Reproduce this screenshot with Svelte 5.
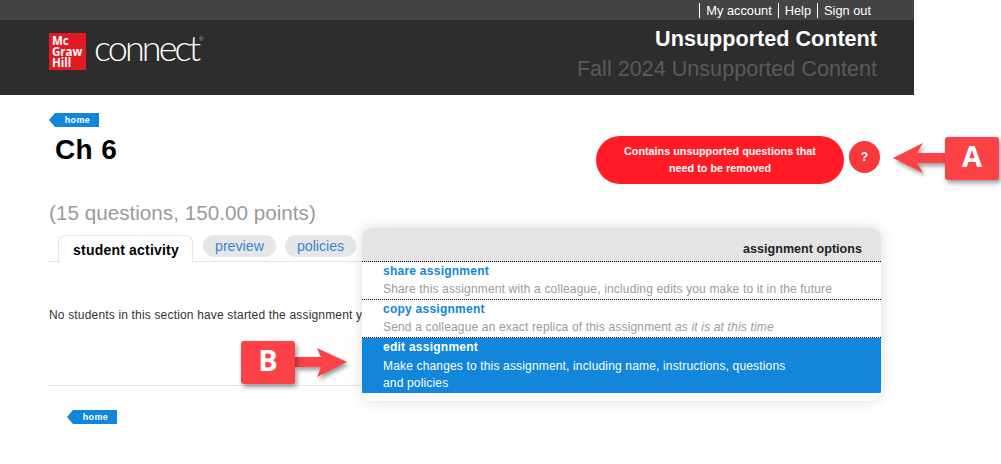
<script>
  const links = ['My account', 'Help', 'Sign out'];
  const tabs = ['preview', 'policies'];
</script>

<div class="page">
  <header class="header">
    <nav class="topbar">
      {#each links as link}
        <span class="toplink">{link}</span>
      {/each}
    </nav>
    <div class="brand">
      <div class="logo">
        <div class="mh"><span>Mc</span><span>Graw</span><span>Hill</span></div>
        <span class="connect">connect</span><span class="reg">®</span>
      </div>
      <div class="course">
        <div class="course-title">Unsupported Content</div>
        <div class="course-sub">Fall 2024 Unsupported Content</div>
      </div>
    </div>
  </header>

  <main class="main">
    <div class="home"><span>home</span></div>
    <h1 class="title">Ch 6</h1>
    <p class="count">(15 questions, 150.00 points)</p>
    <div class="tabs">
      <div class="tab active">student activity</div>
      {#each tabs as t}
        <div class="tab pill">{t}</div>
      {/each}
    </div>
    <p class="empty">No students in this section have started the assignment yet.</p>
    <hr class="rule" />
    <div class="home second"><span>home</span></div>
  </main>

  <div class="warning">Contains unsupported questions that<br />need to be removed</div>
  <div class="help">?</div>

  <section class="popup">
    <div class="popup-head">assignment options</div>
    <div class="option">
      <div class="opt-title">share assignment</div>
      <div class="opt-desc">Share this assignment with a colleague, including edits you make to it in the future</div>
    </div>
    <div class="option">
      <div class="opt-title">copy assignment</div>
      <div class="opt-desc">Send a colleague an exact replica of this assignment <em>as it is at this time</em></div>
    </div>
    <div class="option selected">
      <div class="opt-title">edit assignment</div>
      <div class="opt-desc">Make changes to this assignment, including name, instructions, questions<br />and policies</div>
    </div>
  </section>

  <svg class="arrow arrow-a" width="60" height="40" viewBox="0 0 60 40">
    <path d="M2 20 L32 5 L26 15 L56 15 L56 25 L26 25 L32 35 Z" />
  </svg>
  <div class="callout callout-a">A</div>
  <svg class="arrow arrow-b" width="60" height="40" viewBox="0 0 60 40">
    <path d="M4 15 L30 15 L26 6 L56 20 L26 35 L30 25 L4 25 Z" />
  </svg>
  <div class="callout callout-b">B</div>
</div>

<style>
  :global(body) {
    margin: 0;
    background: #fff;
  }
  .page {
    position: relative;
    width: 1001px;
    height: 464px;
    overflow: hidden;
    font-family: "Liberation Sans", Arial, sans-serif;
    color: #222;
  }
  .header {
    width: 914px;
    height: 95px;
    background: #2d2d2d;
  }
  .topbar {
    display: flex;
    justify-content: flex-end;
    align-items: center;
    height: 20px;
    padding-right: 43px;
    box-sizing: border-box;
    background: #444;
    color: #fff;
    font-size: 12.8px;
    line-height: 15px;
  }
  .toplink {
    border-left: 1px solid #fff;
    padding-left: 6px;
    margin-left: 6px;
  }
  .brand {
    display: flex;
    justify-content: space-between;
    padding: 0 37px 0 49px;
  }
  .logo {
    display: flex;
    align-items: flex-start;
    padding-top: 13px;
  }
  .mh {
    display: flex;
    flex-direction: column;
    justify-content: center;
    box-sizing: border-box;
    width: 37px;
    height: 37px;
    padding-left: 3px;
    background: #e21a23;
    color: #fff;
    font-family: "Open Sans", sans-serif;
    font-size: 11.5px;
    font-weight: 700;
    line-height: 11px;
  }
  .connect {
    margin: 1px 0 0 8px;
    color: #fff;
    font-family: "Lato", sans-serif;
    font-size: 36px;
    font-weight: 300;
    line-height: 26px;
    letter-spacing: -2.9px;
  }
  .reg {
    margin: 3px 0 0 1px;
    color: #aaa;
    font-size: 6px;
    line-height: 7px;
  }
  .course {
    text-align: right;
    padding-top: 4px;
    font-size: 21.6px;
    line-height: 30px;
  }
  .course-title {
    color: #fff;
    font-weight: 700;
  }
  .course-sub {
    color: #5a5a5a;
  }
  .main {
    padding: 18px 0 0 49px;
    width: 832px;
  }
  .home {
    display: flex;
    justify-content: flex-end;
    width: 50px;
    height: 14px;
    background: #1186da;
    clip-path: polygon(6px 0, 100% 0, 100% 100%, 6px 100%, 0 50%);
    color: #fff;
    font-size: 9px;
    font-weight: 700;
    line-height: 14px;
    letter-spacing: 0.3px;
  }
  .home span {
    padding-right: 9px;
  }
  .title {
    margin: 7px 0 0 6px;
    color: #000;
    font-size: 28px;
    font-weight: 700;
    line-height: 32px;
    letter-spacing: 0.4px;
  }
  .count {
    margin: 35px 0 0;
    color: #9b9b9b;
    font-size: 20.7px;
    line-height: 24px;
  }
  .tabs {
    display: flex;
    align-items: flex-start;
    gap: 9px;
    height: 27px;
    margin-top: 10px;
    padding-left: 9px;
    box-sizing: border-box;
    border-bottom: 1px solid #e4e4e4;
  }
  .tab {
    box-sizing: border-box;
    text-align: center;
  }
  .active {
    width: 135px;
    height: 28px;
    margin-right: 1px;
    border: 1px solid #e4e4e4;
    border-bottom: 0;
    border-radius: 8px 8px 0 0;
    background: #fff;
    color: #000;
    font-size: 14px;
    font-weight: 700;
    line-height: 29px;
    letter-spacing: 0.2px;
    padding-left: 1px;
  }
  .pill {
    height: 22px;
    padding: 0 12px;
    border-radius: 11px;
    background: #e6e6e6;
    color: #3b82d6;
    font-size: 14.2px;
    line-height: 22px;
  }
  .empty {
    margin: 46px 0 0;
    color: #333;
    font-size: 12px;
    line-height: 14px;
    white-space: nowrap;
    letter-spacing: 0.17px;
  }
  .rule {
    height: 1px;
    margin: 63px 0 0;
    border: 0;
    background: #e4e4e4;
  }
  .second {
    margin: 24px 0 0 18px;
  }
  .warning {
    position: absolute;
    left: 596px;
    top: 136px;
    box-sizing: border-box;
    width: 248px;
    height: 48px;
    padding-top: 7px;
    border-radius: 24px;
    background: #ff1c24;
    color: #fff;
    font-size: 10.8px;
    font-weight: 700;
    line-height: 17px;
    text-align: center;
  }
  .help {
    position: absolute;
    left: 849px;
    top: 141px;
    width: 31px;
    height: 32px;
    border-radius: 50%;
    background: #f8383d;
    color: #fff;
    font-size: 12px;
    font-weight: 700;
    line-height: 32px;
    text-align: center;
  }
  .popup {
    position: absolute;
    left: 362px;
    top: 228px;
    box-sizing: border-box;
    width: 519px;
    height: 173px;
    overflow: hidden;
    border-radius: 10px;
    background: #fff;
    box-shadow: 0 0 14px rgba(0, 0, 0, 0.14);
  }
  .popup-head {
    box-sizing: border-box;
    height: 34px;
    padding: 13px 19px 0 0;
    background: #e4e4e4;
    color: #222;
    font-size: 12.5px;
    font-weight: 700;
    line-height: 16px;
    letter-spacing: 0.05px;
    text-align: right;
    border-bottom: 1px dotted #000;
  }
  .option {
    box-sizing: border-box;
    height: 38px;
    padding: 0 21px;
    border-bottom: 1px dotted #000;
    font-size: 12px;
    line-height: 18px;
  }
  .opt-title {
    color: #1186da;
    font-weight: 700;
    letter-spacing: 0.25px;
  }
  .opt-desc {
    color: #9b9b9b;
    letter-spacing: 0.16px;
  }
  .selected {
    height: 55px;
    padding-top: 1px;
    border-bottom: 0;
    background: #1186da;
    line-height: 17px;
  }
  .selected .opt-title,
  .selected .opt-desc {
    color: #fff;
  }
  .selected .opt-desc {
    margin-top: 2px;
  }
  .callout {
    position: absolute;
    width: 54px;
    height: 43px;
    border-radius: 3px;
    background: #fc4246;
    color: #fff;
    font-size: 29px;
    font-weight: 700;
    line-height: 38px;
    text-align: center;
    box-shadow: 2px 3px 5px rgba(0, 0, 0, 0.4);
    font-family: "Open Sans", sans-serif;
  }
  .callout-a {
    left: 945px;
    top: 137px;
  }
  .callout-b {
    left: 241px;
    top: 341px;
  }
  .arrow {
    position: absolute;
    fill: #fc4246;
    filter: drop-shadow(2px 3px 2px rgba(0, 0, 0, 0.4));
  }
  .arrow-a {
    left: 891px;
    top: 138px;
  }
  .arrow-b {
    left: 291px;
    top: 342px;
  }
</style>
